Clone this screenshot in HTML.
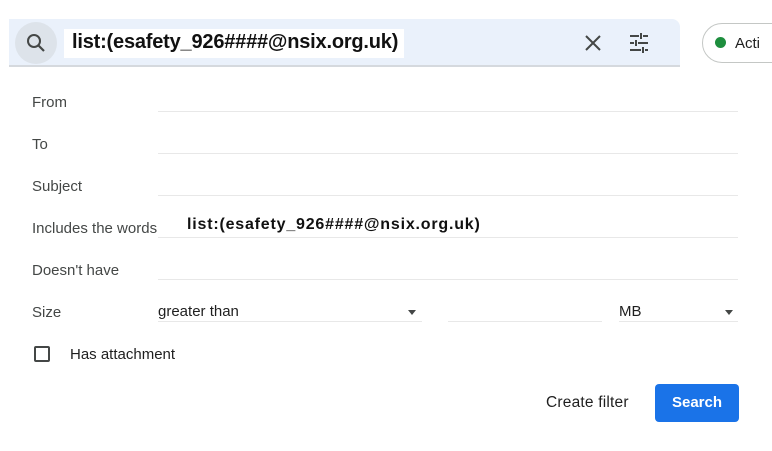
<!DOCTYPE html>
<html><head><style>
body{margin:0;width:772px;height:451px;background:#fff;font-family:"Liberation Sans",Arial,sans-serif;position:relative;overflow:hidden}
.a{position:absolute}
.lbl{position:absolute;left:32px;font-size:15px;color:#444746}
.ln{position:absolute;left:158px;right:34px;height:1px;background:#e8e8e8}
</style></head><body>
<div class="a" style="left:9px;top:19px;width:671px;height:46px;background:#eaf1fb;border-radius:0 8px 0 0"></div>
<div class="a" style="left:9px;top:65px;width:671px;height:2px;background:#d5d9de"></div>
<div class="a" style="left:15px;top:22px;width:42px;height:42px;border-radius:50%;background:#dde3ea"></div>
<svg class="a" style="left:24px;top:31px" width="24" height="24" viewBox="0 0 24 24"><circle cx="10" cy="10" r="6" fill="none" stroke="#444746" stroke-width="2"/><path d="M14.5 14.5L20 20" stroke="#444746" stroke-width="2.2"/></svg>
<div class="a" style="left:64px;top:29px;width:340px;height:29px;background:#fff"></div>
<div class="a" style="left:72px;top:31px;font-size:20px;font-weight:bold;color:#111;letter-spacing:-0.2px">list:(esafety_926####@nsix.org.uk)</div>
<svg class="a" style="left:583px;top:33px" width="20" height="20" viewBox="0 0 20 20"><path d="M3 3L17 17M17 3L3 17" stroke="#444746" stroke-width="2"/></svg>
<svg class="a" style="left:628px;top:32px" width="22" height="22" viewBox="0 0 22 22" stroke="#444746" stroke-width="2"><path d="M2 4h9M15 4h5M13 1v6M2 11h4M10 11h10M8 8v6M2 18h11M17 18h3M15 15v6"/></svg>
<div class="a" style="left:702px;top:23px;width:100px;height:38px;border:1px solid #c4c7c5;border-radius:20px"></div>
<div class="a" style="left:715px;top:37px;width:11px;height:11px;border-radius:50%;background:#1e8e3e"></div>
<div class="a" style="left:735px;top:35px;font-size:15px;color:#1f1f1f">Acti</div>

<div class="lbl" style="top:94px">From</div><div class="ln" style="top:111px"></div>
<div class="lbl" style="top:136px">To</div><div class="ln" style="top:153px"></div>
<div class="lbl" style="top:178px">Subject</div><div class="ln" style="top:195px"></div>
<div class="lbl" style="top:220px">Includes the words</div><div class="ln" style="top:237px"></div>
<div class="a" style="left:187px;top:216px;font-size:16px;font-weight:bold;color:#111;letter-spacing:0.8px">list:(esafety_926####@nsix.org.uk)</div>
<div class="lbl" style="top:262px">Doesn't have</div><div class="ln" style="top:279px"></div>
<div class="lbl" style="top:304px">Size</div>
<div class="a" style="left:158px;top:303px;font-size:15px;color:#1f1f1f">greater than</div>
<div class="a" style="left:408px;top:310px;width:0;height:0;border-left:4px solid transparent;border-right:4px solid transparent;border-top:5px solid #444746"></div>
<div class="a" style="left:158px;top:321px;width:264px;height:1px;background:#e8e8e8"></div>
<div class="a" style="left:448px;top:321px;width:154px;height:1px;background:#e8e8e8"></div>
<div class="a" style="left:619px;top:303px;font-size:15px;color:#1f1f1f">MB</div>
<div class="a" style="left:725px;top:310px;width:0;height:0;border-left:4px solid transparent;border-right:4px solid transparent;border-top:5px solid #444746"></div>
<div class="a" style="left:619px;top:321px;width:119px;height:1px;background:#e8e8e8"></div>
<div class="a" style="left:34px;top:346px;width:12px;height:12px;border:2px solid #444746;border-radius:2px"></div>
<div class="a" style="left:70px;top:346px;font-size:15px;color:#1f1f1f">Has attachment</div>
<div class="a" style="left:546px;top:394px;font-size:15.5px;color:#1f1f1f;letter-spacing:0.2px">Create filter</div>
<div class="a" style="left:655px;top:384px;width:84px;height:38px;background:#1a73e8;border-radius:4px;color:#fff;font-size:15px;font-weight:bold;text-align:center;line-height:38px">Search</div>
</body></html>
